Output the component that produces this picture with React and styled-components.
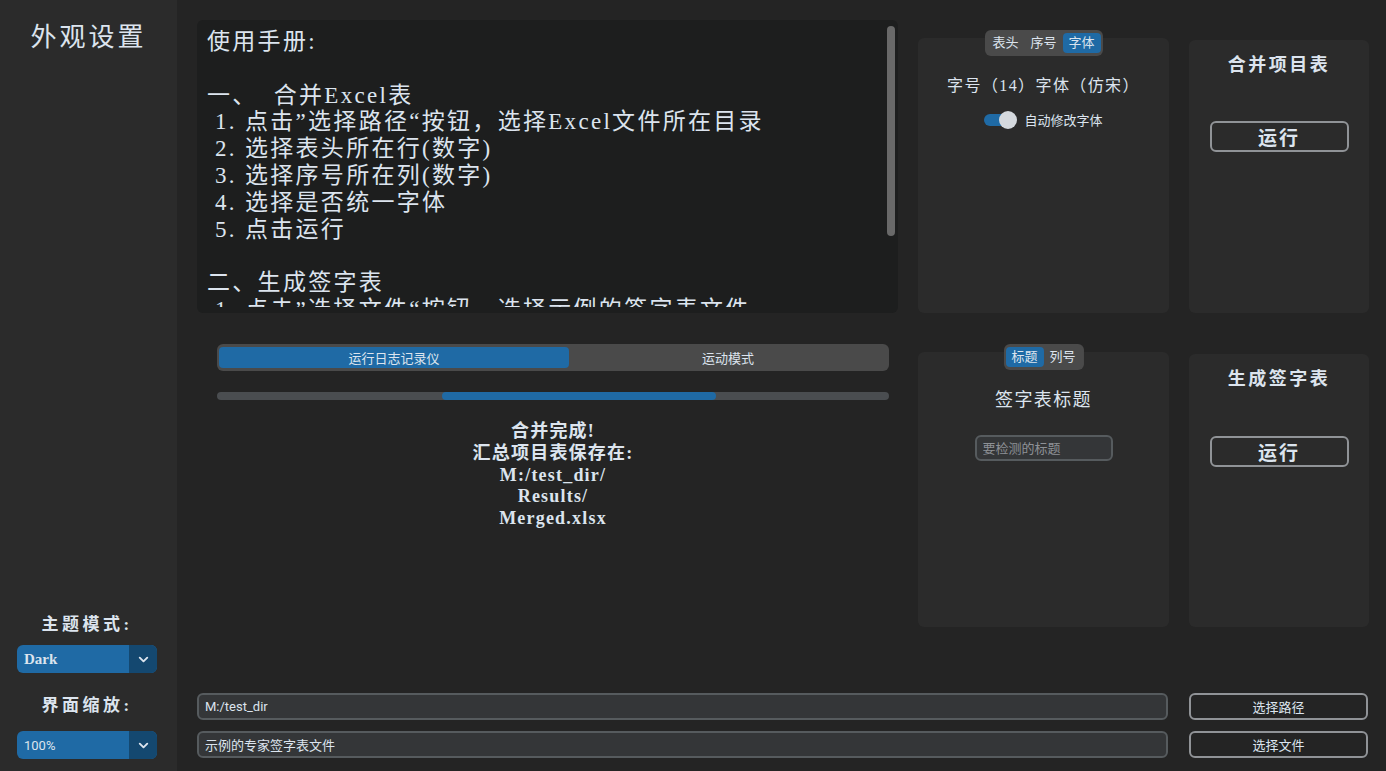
import React from 'react';
import styled, { createGlobalStyle } from 'styled-components';
import { ChevronDown } from 'lucide-react';

const Global = createGlobalStyle`
  html, body { margin: 0; padding: 0; background: #242424; }
  body { width: 1386px; height: 771px; overflow: hidden; }
  * { box-sizing: border-box; }
`;

const SERIF = `"Liberation Serif", "Noto Sans CJK SC", serif`;
const SANS = `"Roboto", "Noto Sans CJK SC", sans-serif`;
const TEXT = '#dce4ee';
const BLUE = '#1f6aa5';

const Shell = styled.div`
  display: flex;
  width: 1386px;
  height: 771px;
  color: ${TEXT};
`;

// left bar
const Sidebar = styled.aside`
  width: 177px;
  background: #2b2b2b;
  display: flex;
  flex-direction: column;
  align-items: center;
  padding: 20px 0 12px;
`;

const SideTitle = styled.h1`
  margin: 0;
  font-family: ${SERIF};
  font-weight: 400;
  font-size: 26px;
  letter-spacing: 3px;
  line-height: 36px;
`;

const SideBottom = styled.div`
  margin-top: auto;
  margin-right: 3px;
  display: flex;
  flex-direction: column;
  align-items: center;
`;

const SideLabel = styled.div`
  font-family: ${SERIF};
  font-weight: 700;
  font-size: 17px;
  letter-spacing: 3.5px;
  line-height: 24px;
  margin-top: ${p => p.$top || 0}px;
  margin-bottom: ${p => p.$bottom || 8}px;
`;

const Combo = styled.div`
  width: 140px;
  height: 28px;
  border-radius: 6px;
  background: ${BLUE};
  display: flex;
  overflow: hidden;
`;

const ComboValue = styled.div`
  flex: 1;
  display: flex;
  align-items: center;
  padding-left: 7px;
  font-family: ${p => (p.$serif ? SERIF : SANS)};
  font-weight: ${p => (p.$serif ? 700 : 400)};
  font-size: ${p => (p.$serif ? 15 : 13)}px;
`;

const ComboArrow = styled.div`
  width: 28px;
  background: #144870;
  display: flex;
  align-items: center;
  justify-content: center;
`;

// main area
const Main = styled.main`
  flex: 1;
  display: flex;
  flex-direction: column;
  padding: 20px 17px 13px 20px;
`;

const Row = styled.div`
  display: grid;
  grid-template-columns: 701px 251px 180px;
  grid-template-rows: minmax(0, 1fr);
  column-gap: 20px;
  height: ${p => p.$h}px;
  flex-shrink: 0;
  margin-top: ${p => p.$mt || 0}px;
`;

const Textbox = styled.div`
  background: #1d1e1e;
  border-radius: 6px;
  display: flex;
  min-height: 0;
  overflow: hidden;
  padding: 6px 3px 6px 6px;
`;

const TextArea = styled.div`
  flex: 1;
  overflow: hidden;
  padding: 3px 4px;
  font-family: ${SERIF};
  font-size: 23px;
  letter-spacing: 2.3px;
  line-height: 26.8px;
  white-space: pre;
`;

const ScrollTrack = styled.div`
  width: 8px;
`;

const ScrollThumb = styled.div`
  height: 210px;
  border-radius: 4px;
  background: #696969;
`;

const Tabview = styled.div`
  position: relative;
  padding-top: ${p => p.$top}px;
  display: flex;
  flex-direction: column;
  min-height: 0;
`;

const TabFrame = styled.div`
  flex: 1;
  margin-top: 8px;
  background: #2b2b2b;
  border-radius: 6px;
  display: flex;
  flex-direction: column;
  align-items: center;
  padding-top: ${p => p.$pt}px;
`;

const SegTabs = styled.div`
  position: absolute;
  top: ${p => p.$top}px;
  left: 50%;
  transform: translateX(-50%);
  display: flex;
  padding: 3px 2px;
  background: #4a4a4a;
  border-radius: 6px;
`;

const SegTab = styled.div`
  height: 20px;
  padding: 0 6px;
  border-radius: 4px;
  background: ${p => (p.$on ? BLUE : 'transparent')};
  font-family: ${SANS};
  font-size: 13px;
  line-height: 20px;
`;

const PanelText = styled.div`
  font-family: ${SERIF};
  font-size: ${p => p.$size || 16}px;
  letter-spacing: 1.4px;
  line-height: 24px;
`;

const SwitchRow = styled.div`
  display: flex;
  align-items: center;
  gap: 7px;
  margin-top: 12px;
  font-family: ${SANS};
  font-size: 13px;
`;

const Switch = styled.div`
  position: relative;
  width: 33px;
  height: 18px;
  display: flex;
  align-items: center;
`;

const SwitchTrack = styled.div`
  width: 30px;
  height: 12px;
  border-radius: 6px;
  background: ${BLUE};
`;

const SwitchKnob = styled.div`
  position: absolute;
  right: 0;
  top: 0;
  width: 18px;
  height: 18px;
  border-radius: 50%;
  background: #d5d9de;
`;

const SideFrame = styled.div`
  background: #2b2b2b;
  border-radius: 6px;
  margin-top: ${p => p.$mt}px;
  display: flex;
  flex-direction: column;
  align-items: center;
  padding-top: 13px;
`;

const FrameTitle = styled.div`
  font-family: ${SERIF};
  font-weight: 700;
  font-size: 18px;
  letter-spacing: 2.5px;
  line-height: 24px;
`;

const OutlineButton = styled.button`
  width: ${p => p.$w}px;
  height: ${p => p.$h}px;
  margin-top: ${p => p.$mt || 0}px;
  background: transparent;
  border: 2px solid #909397;
  border-radius: 6px;
  color: ${TEXT};
  font-family: ${p => (p.$big ? SERIF : SANS)};
  font-weight: ${p => (p.$big ? 700 : 400)};
  font-size: ${p => (p.$big ? 19 : 13)}px;
  letter-spacing: ${p => (p.$big ? 2 : 0)}px;
  padding: 0;
  cursor: pointer;
`;

const LogColumn = styled.div`
  display: flex;
  flex-direction: column;
  padding: 0 9px 0 20px;
  min-height: 0;
`;

const ModeSwitch = styled.div`
  display: grid;
  grid-template-columns: 350px 1fr;
  height: 27px;
  padding: 3px 2px;
  background: #4a4a4a;
  border-radius: 6px;
`;

const ModeItem = styled.div`
  border-radius: 4px;
  background: ${p => (p.$on ? BLUE : 'transparent')};
  display: flex;
  align-items: center;
  justify-content: center;
  font-family: ${SANS};
  font-size: 13px;
`;

const Progress = styled.div`
  height: 8px;
  margin-top: 21px;
  border-radius: 4px;
  background: #4a4d50;
  display: flex;
  overflow: hidden;
`;

const ProgressFill = styled.div`
  margin-left: ${p => p.$start}px;
  width: ${p => p.$len}px;
  border-radius: 4px;
  background: ${BLUE};
`;

const LogText = styled.div`
  margin-top: 21px;
  text-align: center;
  font-family: ${SERIF};
  font-weight: 700;
  font-size: 18px;
  line-height: 21.8px;
  letter-spacing: 1.2px;
`;

const Entry = styled.input`
  height: ${p => p.$h || 27}px;
  width: ${p => (p.$w ? `${p.$w}px` : '100%')};
  margin-top: ${p => p.$mt || 0}px;
  background: #343638;
  border: 2px solid #565b5e;
  border-radius: 6px;
  color: ${TEXT};
  font-family: ${SANS};
  font-size: 13px;
  padding: 0 6px;
  outline: none;
  &::placeholder { color: #8e9196; }
`;

const BottomRows = styled.div`
  margin-top: auto;
  display: grid;
  grid-template-columns: 971px 179px;
  column-gap: 21px;
  row-gap: 11px;
`;

const manual = `使用手册:

一、  合并Excel表
 1. 点击”选择路径“按钮，选择Excel文件所在目录
 2. 选择表头所在行(数字)
 3. 选择序号所在列(数字)
 4. 选择是否统一字体
 5. 点击运行

二、生成签字表
 1. 点击”选择文件“按钮，选择示例的签字表文件`;

export default function App() {
  return (
    <Shell>
      <Global />
      <Sidebar>
        <SideTitle>外观设置</SideTitle>
        <SideBottom>
          <SideLabel>主题模式:</SideLabel>
          <Combo>
            <ComboValue $serif>Dark</ComboValue>
            <ComboArrow><ChevronDown size={15} strokeWidth={3} color="#dce4ee" /></ComboArrow>
          </Combo>
          <SideLabel $top={21} $bottom={13}>界面缩放:</SideLabel>
          <Combo>
            <ComboValue>100%</ComboValue>
            <ComboArrow><ChevronDown size={15} strokeWidth={3} color="#dce4ee" /></ComboArrow>
          </Combo>
        </SideBottom>
      </Sidebar>

      <Main>
        <Row $h={293}>
          <Textbox>
            <TextArea>{manual}</TextArea>
            <ScrollTrack><ScrollThumb /></ScrollTrack>
          </Textbox>

          <Tabview $top={10}>
            <TabFrame $pt={36}>
              <PanelText>字号（14）字体（仿宋）</PanelText>
              <SwitchRow>
                <Switch><SwitchTrack /><SwitchKnob /></Switch>
                自动修改字体
              </SwitchRow>
            </TabFrame>
            <SegTabs $top={10}>
              <SegTab>表头</SegTab>
              <SegTab>序号</SegTab>
              <SegTab $on>字体</SegTab>
            </SegTabs>
          </Tabview>

          <SideFrame $mt={20}>
            <FrameTitle>合并项目表</FrameTitle>
            <OutlineButton $big $w={139} $h={31} $mt={44}>运行</OutlineButton>
          </SideFrame>
        </Row>

        <Row $h={283} $mt={31}>
          <LogColumn>
            <ModeSwitch>
              <ModeItem $on>运行日志记录仪</ModeItem>
              <ModeItem>运动模式</ModeItem>
            </ModeSwitch>
            <Progress>
              <ProgressFill $start={225} $len={274} />
            </Progress>
            <LogText>
              合并完成!<br />
              汇总项目表保存在:<br />
              M:/test_dir/<br />
              Results/<br />
              Merged.xlsx
            </LogText>
          </LogColumn>

          <Tabview $top={0}>
            <TabFrame $pt={36}>
              <PanelText $size={18}>签字表标题</PanelText>
              <Entry $w={138} $h={26} $mt={23} placeholder="要检测的标题" readOnly />
            </TabFrame>
            <SegTabs $top={0}>
              <SegTab $on>标题</SegTab>
              <SegTab>列号</SegTab>
            </SegTabs>
          </Tabview>

          <SideFrame $mt={10}>
            <FrameTitle>生成签字表</FrameTitle>
            <OutlineButton $big $w={139} $h={31} $mt={45}>运行</OutlineButton>
          </SideFrame>
        </Row>

        <BottomRows>
          <Entry defaultValue="M:/test_dir" readOnly />
          <OutlineButton $w={179} $h={27}>选择路径</OutlineButton>
          <Entry defaultValue="示例的专家签字表文件" readOnly />
          <OutlineButton $w={179} $h={27}>选择文件</OutlineButton>
        </BottomRows>
      </Main>
    </Shell>
  );
}
